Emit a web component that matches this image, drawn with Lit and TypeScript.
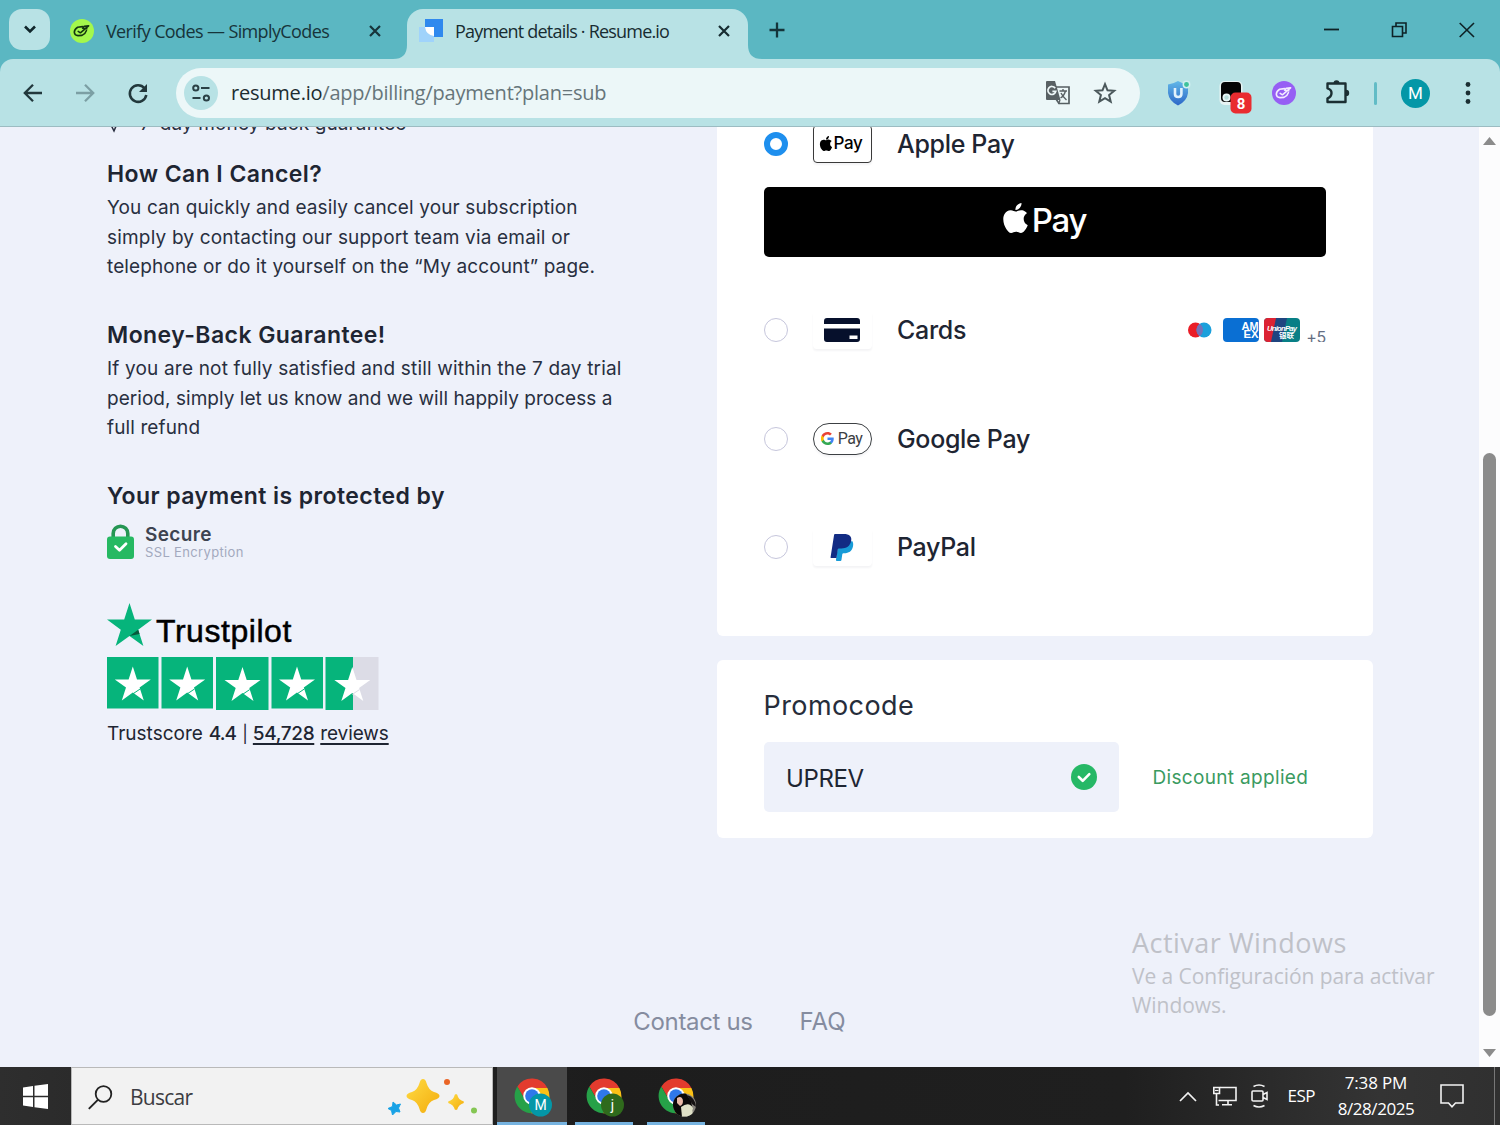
import { LitElement, html, css, svg } from "lit";
import { customElement } from "lit/decorators.js";

const APPLE =
  "M12.152 6.896c-.948 0-2.415-1.078-3.96-1.04-2.04.027-3.91 1.183-4.961 3.014-2.117 3.675-.546 9.103 1.519 12.09 1.013 1.454 2.208 3.09 3.792 3.039 1.52-.065 2.09-.987 3.935-.987 1.831 0 2.35.987 3.96.948 1.637-.026 2.676-1.48 3.676-2.948 1.156-1.688 1.636-3.325 1.662-3.415-.039-.013-3.182-1.221-3.22-4.857-.026-3.04 2.48-4.494 2.597-4.559-1.429-2.09-3.623-2.324-4.39-2.376-2-.156-3.675 1.09-4.61 1.09zM15.53 3.83c.843-1.012 1.4-2.427 1.245-3.83-1.207.052-2.662.805-3.532 1.818-.78.896-1.454 2.338-1.273 3.714 1.338.104 2.715-.688 3.559-1.701";

const STAR = "M0 -18 L4.2 -5 H18 L6.8 3 L11 16 L0 8 L-11 16 L-6.8 3 L-18 -5 H-4.2 Z";

const tagMark = (color: string) => svg`
  <g fill="none" stroke=${color} stroke-width="1.6" stroke-linecap="round" stroke-linejoin="round">
    <path d="M12.5 7.6L7.6 8.2Q4.4 10.2 4.3 13.2Q4.6 16.4 8 16.6L12 16.4Q15.6 14.6 16.4 11.6"/>
    <path d="M8.2 12.4L10.4 13.8L18.6 6.8L14.2 7.2L12.6 9.2L16.8 9.8"/>
  </g>`;

@customElement("browser-tabs")
class BrowserTabs extends LitElement {
  static styles = css`
    :host { display: flex; height: 59px; background: #5bb7c2; font-family: "Open Sans", sans-serif; font-size: 18px; color: #17343a; }
    svg { display: block; flex: none; }
    .search { width: 41px; height: 41px; margin: 9px 0 0 9px; border-radius: 13px; background: #b8e2e5; display: grid; place-items: center; box-sizing: border-box; }
    .tab { display: flex; align-items: center; height: 59px; box-sizing: border-box; padding-top: 2px; }
    .idle { width: 343px; padding-left: 20px; }
    .active { width: 341px; height: 50px; margin-top: 9px; padding: 0 0 7px 12px; background: #b8e2e5; border-radius: 16px 16px 0 0; color: #172c31; }
    .title { white-space: nowrap; line-height: 26px; flex: none; }
    .idle .title { width: 262px; margin-left: 12px; letter-spacing: -0.62px; }
    .active .title { width: 262px; margin-left: 12px; letter-spacing: -0.8px; }
    .icons { margin-left: 6px; margin-top: 21px; height: 18px; }
    .window { display: flex; gap: 52px; margin: 21px 25px 0 auto; }
    .flare { align-self: flex-end; }
  `;
  render() {
    return html`
      <div class="search"><svg width="14" height="9" viewBox="0 0 14 9"><path d="M2 1.5L7 6.5L12 1.5" fill="none" stroke="#10262b" stroke-width="2.6"/></svg></div>
      <div class="tab idle">
        <svg width="24" height="24" viewBox="0 0 24 24"><circle cx="12" cy="12" r="12" fill="#a4f84c"/>${tagMark("#14360f")}</svg>
        <span class="title">Verify Codes — SimplyCodes</span>
        <svg width="14" height="14" viewBox="0 0 14 14"><path d="M2 2L12 12M12 2L2 12" stroke="#17343a" stroke-width="2.2"/></svg>
      </div>
      <svg class="flare" width="14" height="14" viewBox="0 0 14 14"><path d="M14 0Q14 14 0 14H14Z" fill="#b8e2e5"/></svg>
      <div class="tab active">
        <svg width="24" height="24" viewBox="0 0 24 24">
          <path d="M6 0H24V18H6Z" fill="#2f89ee"/><path d="M0 8H15V23H0Z" fill="#a0d3fb"/><path d="M6 8H15V17Q7 16 6 8Z" fill="#fff"/>
        </svg>
        <span class="title">Payment details · Resume.io</span>
        <svg width="14" height="14" viewBox="0 0 14 14"><path d="M2 2L12 12M12 2L2 12" stroke="#172c31" stroke-width="2.2"/></svg>
      </div>
      <svg class="flare" width="14" height="14" viewBox="0 0 14 14"><path d="M0 0Q0 14 14 14H0Z" fill="#b8e2e5"/></svg>
      <svg class="icons" width="18" height="18" viewBox="0 0 18 18"><path d="M9 1.5V16.5M1.5 9H16.5" stroke="#14343a" stroke-width="2.3"/></svg>
      <div class="window">
        <svg width="16" height="18" viewBox="0 0 16 18"><path d="M1 8.500H16" stroke="#0e2226" stroke-width="1.800"/></svg>
        <svg width="16" height="18" viewBox="0 0 16 18"><path d="M1.500 5.500H11.500V15.500H1.500ZM5 5V2H15V12H12" fill="none" stroke="#0e2226" stroke-width="1.600"/></svg>
        <svg width="16" height="18" viewBox="0 0 16 18"><path d="M.7 2L15 16M15 2L.7 16" stroke="#0e2226" stroke-width="1.600"/></svg>
      </div>`;
  }
}

@customElement("browser-toolbar")
class BrowserToolbar extends LitElement {
  static styles = css`
    :host { display: block; height: 68px; background: #5bb7c2; font-family: "Open Sans", sans-serif; }
    svg { display: block; flex: none; overflow: visible; }
    .bar { display: flex; height: 68px; box-sizing: border-box; padding: 9px 20px 0 20px; background: #b8e2e5; border-radius: 13px 13px 0 0; border-bottom: 1.5px solid #9cbcc2; }
    .nav { display: flex; gap: 26px; width: 157px; height: 50px; align-items: center; }
    .omni { display: flex; align-items: center; width: 964px; height: 50px; margin-left: -1px; box-sizing: border-box; padding: 0 23px 0 8px; border-radius: 25px; background: #ecf7f8; }
    .site { width: 34px; height: 34px; border-radius: 50%; background: #b8e2e5; display: grid; place-items: center; }
    .url { flex: 1; margin-left: 13px; font-size: 20px; line-height: 28px; letter-spacing: -0.22px; color: #66757a; }
    .host { color: #1c2c30; }
    .omni .star { margin-left: 22px; }
    .ext { display: flex; align-items: center; height: 50px; flex: 1; }
    .shield { margin-left: 27px; }
    .mask { margin-left: 29px; }
    .simply { margin-left: 20px; }
    .puzzle { margin-left: 29px; }
    .rule { width: 3px; height: 23px; margin-left: 23px; background: #62bcc6; border-radius: 2px; }
    .avatar { width: 29px; height: 29px; margin-left: 24px; border-radius: 50%; background: #0497a7; color: #fff; text-align: center; font: 400 17px/29px Roboto, sans-serif; }
    .dots { margin-left: 35px; }
  `;
  render() {
    return html`<div class="bar">
      <div class="nav">
        <svg width="26" height="26" viewBox="0 0 26 26"><path d="M22 13H5.500M13 4.800L4.800 13L13 21.200" fill="none" stroke="#22383c" stroke-width="2.300"/></svg>
        <svg width="26" height="26" viewBox="0 0 26 26"><path d="M4 13H20.500M13 4.800L21.200 13L13 21.200" fill="none" stroke="#7c9fa4" stroke-width="2.300"/></svg>
        <svg width="26" height="26" viewBox="0 0 26 26"><path d="M20.500 8.200A8.300 8.300 0 1 0 22.300 15" fill="none" stroke="#22383c" stroke-width="2.500"/><path d="M23 4V12H15Z" fill="#22383c"/></svg>
      </div>
      <div class="omni">
        <div class="site"><svg width="20" height="18" viewBox="0 0 20 18"><g fill="none" stroke="#2a4045" stroke-width="2"><circle cx="4.800" cy="4" r="2.600"/><path d="M10 4H18.500M1.500 14H9.500"/><circle cx="15.400" cy="14" r="2.600"/></g></svg></div>
        <span class="url"><span class="host">resume.io</span>/app/billing/payment?plan=sub</span>
        <svg width="26" height="26" viewBox="0 0 26 26">
          <path d="M10 7H24V23.500H14L11 19" fill="none" stroke="#555f62" stroke-width="1.700"/>
          <path d="M2 1H10L15.500 20H2Q1 20 1 19V2Q1 1 2 1Z" fill="#596164"/>
          <path d="M10.200 8.200A4 4 0 1 0 10.800 11.400H7.400" fill="none" stroke="#eef7f8" stroke-width="1.700"/>
          <path d="M14.500 11H22M18 9V11M20.500 11Q19 16 15.500 18M16 13Q18 17 21.500 20M15 20L13.500 24" fill="none" stroke="#596164" stroke-width="1.400"/>
        </svg>
        <svg class="star" width="24" height="24" viewBox="0 0 24 24"><path d="M12 3.200L14.500 9.300L21.200 9.800L16.100 14.100L17.700 20.600L12 17.100L6.300 20.600L7.900 14.100L2.800 9.800L9.500 9.300Z" fill="none" stroke="#4b585b" stroke-width="2"/></svg>
      </div>
      <div class="ext">
        <svg class="shield" width="24" height="26" viewBox="0 0 24 26">
          <defs><linearGradient id="sh" x1="0" y1="0" x2="0" y2="1"><stop offset="0" stop-color="#62b8e8"/><stop offset="1" stop-color="#2c67c8"/></linearGradient></defs>
          <path d="M11 1Q16 4 21 4.500V13Q20 21 11 25.500Q2 21 1 13V4.500Q6 4 11 1Z" fill="url(#sh)"/>
          <path d="M8 8V14Q8 17 11.200 17Q14.400 17 14.400 14V8" fill="none" stroke="#e2f2fc" stroke-width="2.600"/>
          <circle cx="19.500" cy="4.500" r="3.200" fill="#3ec29b" stroke="#d2eff0" stroke-width="1.500"/>
        </svg>
        <svg class="mask" width="32" height="32" viewBox="0 0 32 32">
          <rect x="-.5" y="4" width="23" height="24" rx="5" fill="#e6f3f3"/><rect x="1" y="5" width="20" height="20" rx="4" fill="#050505"/>
          <circle cx="6.500" cy="20.500" r="4" fill="#e9f7f7"/><circle cx="6.500" cy="20.500" r="2.200" fill="#b8dedb"/>
          <rect x="10.500" y="15.500" width="21" height="21" rx="5" fill="#e92c30"/>
          <text x="21" y="31.500" text-anchor="middle" font-family="Roboto, sans-serif" font-weight="700" font-size="15" fill="#fff">8</text>
        </svg>
        <svg class="simply" width="24" height="24" viewBox="0 0 24 24"><circle cx="12" cy="12" r="12" fill="#965ff4"/>${tagMark("#f3ecff")}</svg>
        <svg class="puzzle" width="26" height="26" viewBox="0 0 26 26">
          <path d="M2.500 3.500H20.500V22H2.500V18.300Q6.500 17 6.500 13Q6.500 9.500 2.500 8.300Z" fill="none" stroke="#1b2f33" stroke-width="2.400" stroke-linejoin="round"/>
          <path d="M8.500 3.300A3 3 0 0 1 14.500 3.300ZM21 9.700A3.200 3.200 0 0 1 21 16.100Z" fill="#1b2f33"/>
        </svg>
        <div class="rule"></div>
        <div class="avatar">M</div>
        <svg class="dots" width="6" height="24" viewBox="0 0 6 24"><g fill="#1b2f33"><circle cx="3" cy="3.500" r="2.400"/><circle cx="3" cy="12" r="2.400"/><circle cx="3" cy="20.500" r="2.400"/></g></svg>
      </div>
    </div>`;
  }
}

@customElement("trust-info")
class TrustInfo extends LitElement {
  static styles = css`
    :host { display: flex; flex-direction: column; width: 717px; flex: none; box-sizing: border-box; padding-left: 107px; font-family: Inter, sans-serif; color: #1e2532; }
    svg { display: block; flex: none; }
    p { margin: 0; font-size: 19px; line-height: 29.33px; letter-spacing: 0.12px; color: #282f40; white-space: nowrap; }
    p span { display: block; }
    .w1 { letter-spacing: 0.18px; }
    .w2 { letter-spacing: 0.04px; }
    .clip { display: flex; align-items: center; gap: 21px; margin-top: -18px; padding-left: 4px; }
    h3 { margin: 39px 0 4px; font-size: 23px; line-height: 30px; font-weight: 600; letter-spacing: 0.43px; white-space: nowrap; }
    .clip + h3 { margin-top: 21px; }
    .ssl { display: flex; gap: 11px; height: 36px; margin-top: 9px; }
    .ssl b { display: block; font-size: 19px; line-height: 21px; font-weight: 600; letter-spacing: 0.35px; color: #3d4351; }
    .ssl small { display: block; font-size: 13px; line-height: 15px; letter-spacing: 0.35px; color: #a3a9be; }
    .tp { display: flex; gap: 4px; height: 44px; margin-top: 43px; }
    .tp span { font: 32px/56px "Liberation Sans", sans-serif; letter-spacing: 0.55px; color: #000; -webkit-text-stroke: 0.5px #000; }
    .rating { margin-top: 10px; }
    .score { display: flex; margin-top: 8px; font-size: 19px; line-height: 32px; }
    .num { font-weight: 500; letter-spacing: -0.9px; margin-left: 6px; }
    .bar { margin: 0 5px 0 6px; font-size: 17px; }
    .link { text-decoration: underline; text-underline-offset: 3px; text-decoration-thickness: 1.5px; letter-spacing: -0.1px; }
    .score .count { font-weight: 500; letter-spacing: -0.35px; margin-right: 6px; }
  `;
  render() {
    return html`
      <p class="clip"><svg width="8" height="18" viewBox="0 0 8 18"><path d="M0 10L3 16L8 4" fill="none" stroke="#282f40" stroke-width="1.500"/></svg>7-day money back guarantee</p>
      <h3>How Can I Cancel?</h3>
      <p><span>You can quickly and easily cancel your subscription</span><span class="w1">simply by contacting our support team via email or</span><span>telephone or do it yourself on the “My account” page.</span></p>
      <h3>Money-Back Guarantee!</h3>
      <p><span class="w1">If you are not fully satisfied and still within the 7 day trial</span><span class="w2">period, simply let us know and we will happily process a</span><span>full refund</span></p>
      <h3>Your payment is protected by</h3>
      <div class="ssl">
        <svg width="27" height="36" viewBox="0 0 27 36"><path d="M6.200 14V9.500A7.300 7.300 0 0 1 20.800 9.500V14" fill="none" stroke="#259653" stroke-width="3.600"/><rect x="0" y="12.500" width="27" height="22.500" rx="3" fill="#26b962"/><path d="M8.500 22.500L12.500 26.200L19 19.700" fill="none" stroke="#fff" stroke-width="2.800" stroke-linecap="round" stroke-linejoin="round"/></svg>
        <div><b>Secure</b><small>SSL Encryption</small></div>
      </div>
      <div class="tp">
        <svg width="45" height="44" viewBox="0 0 45 44"><path d="M22.500 0L27.800 16.500H45L31.200 26.700L36.400 43L22.500 32.900L8.600 43L13.800 26.700L0 16.500H17.200Z" fill="#06b47b"/><path d="M31.200 26.700L22.500 32.900L32.600 30.900Z" fill="#065a3c"/></svg>
        <span>Trustpilot</span>
      </div>
      <svg class="rating" width="272" height="53" viewBox="0 0 272 53">
        <g fill="#06b47b"><path d="M0 0H51.500V51.500H0ZM54.500 0H106V51.500H54.500ZM109 0H161.500V53H109ZM164.500 0H216V51.500H164.500ZM218.500 0H246V53H218.500Z"/></g>
        <path d="M246 0H271.500V53H246Z" fill="#dcdce6"/>
        ${[25.8, 80.2, 135.5, 190, 245.3].map(
          (x, i) => svg`<g transform="translate(${x} ${i % 2 || i === 0 ? 27.500 : 28})"><path d=${STAR} fill="#fff"/><path d="M7.200 4.600L0 9.400" stroke=${i === 4 ? "#dcdce6" : "#06b47b"} stroke-width="1"/></g>`
        )}
      </svg>
      <div class="score"><span>Trustscore</span><span class="num">4.4</span><span class="bar">|</span><span class="link count">54,728</span><span class="link">reviews</span></div>`;
  }
}

@customElement("payment-panel")
class PaymentPanel extends LitElement {
  static styles = css`
    :host { display: block; width: 656px; font-family: Inter, sans-serif; color: #1e2532; }
    svg { display: block; flex: none; }
    .card { background: #fff; border-radius: 6px; box-sizing: border-box; padding: 0 47px 0 46.5px; }
    .methods { height: 509px; border-radius: 0 0 6px 6px; overflow: hidden; }
    .row { display: flex; align-items: center; height: 34px; }
    .cards { margin-top: 56px; }
    .wide { margin-top: 74.5px; }
    .radio { width: 24px; height: 24px; box-sizing: border-box; border: 1.5px solid #c6c6dc; border-radius: 50%; }
    .on { border: 6px solid #1e8fee; }
    .logo { display: flex; align-items: center; justify-content: center; width: 59px; height: 38px; margin-left: 25.5px; box-sizing: border-box; border-radius: 4px; box-shadow: 0 2px 2px rgba(30, 40, 80, 0.05); }
    .apple { border: 1.5px solid #3a3a3a; color: #000; font-size: 17px; line-height: 20px; letter-spacing: -0.3px; font-weight: 500; gap: 0; padding: 0 3px 2px 0; }
    .google { height: 32px; border: 1.5px solid #3c4043; border-radius: 16px; color: #3c4043; font-family: Roboto, sans-serif; font-size: 16px; letter-spacing: -0.6px; gap: 4px; padding-right: 2px; }
    .plain { padding-right: 2px; }
    .name { margin-left: 25px; flex: 1; font-size: 25px; font-weight: 500; line-height: 32px; letter-spacing: -0.32px; white-space: nowrap; }
    .pay { display: flex; align-items: flex-start; justify-content: center; gap: 4px; width: 562px; height: 70px; margin-top: 26px; box-sizing: border-box; padding-top: 16px; background: #000; border-radius: 5px; color: #fff; }
    .pay span { font-size: 33px; font-weight: 500; line-height: 34px; letter-spacing: -1.2px; }
    .brands { display: flex; align-items: center; gap: 5px; }
    .more { height: 12px; margin-top: 12px; margin-left: 1px; overflow: hidden; font-size: 16px; line-height: 14px; letter-spacing: -0.3px; color: #656e83; }
    .promo { height: 178px; margin-top: 24px; padding-top: 28px; }
    h2 { margin: 0; font-size: 27px; font-weight: 400; line-height: 36px; letter-spacing: 0.42px; color: #262d3b; }
    .line { display: flex; align-items: center; margin-top: 18px; }
    .field { display: flex; align-items: center; justify-content: space-between; width: 355px; height: 70px; box-sizing: border-box; padding: 0 22px 0 22.5px; border-radius: 5px; background: #eef1fa; font-size: 24px; letter-spacing: -0.4px; }
    .field span { padding-top: 3px; }
    .ok { margin-left: 34px; font-size: 19px; letter-spacing: 0.33px; color: #3a9b5f; }
  `;
  render() {
    return html`
      <div class="card methods">
        <div class="row"><div class="radio on"></div>
          <div class="logo apple"><svg width="14" height="15" viewBox="2 0 20 24"><path d=${APPLE}/></svg>Pay</div>
          <span class="name">Apple Pay</span></div>
        <div class="pay"><svg width="25" height="30" viewBox="2 0 20 24"><path d=${APPLE} fill="#fff"/></svg><span>Pay</span></div>
        <div class="row cards"><div class="radio"></div>
          <div class="logo plain"><svg width="36" height="24" viewBox="0 0 36 24"><path d="M3 0H33Q36 0 36 3V6H0V3Q0 0 3 0ZM0 10.500H36V21Q36 24 33 24H3Q0 24 0 21Z" fill="#06102c"/><path d="M25.500 17.500H33.500V21H25.500Z" fill="#fff"/></svg></div>
          <span class="name">Cards</span>
          <div class="brands">
            <svg width="36" height="24" viewBox="0 0 36 24"><circle cx="13.500" cy="12" r="7.500" fill="#ea1d27"/><circle cx="22" cy="12" r="7.500" fill="#1ba0dc"/><path d="M17.750 5.800A7.500 7.500 0 0 1 17.750 18.200A7.500 7.500 0 0 1 17.750 5.800Z" fill="#7572b8"/></svg>
            <svg width="36" height="24" viewBox="0 0 36 24"><rect width="36" height="24" rx="4" fill="#0a6fd3"/><g font-family="Liberation Sans, sans-serif" font-weight="700" font-size="10" fill="#fff"><text x="18.500" y="11.500" textLength="17" lengthAdjust="spacingAndGlyphs">AM</text><text x="20.500" y="20" textLength="15" lengthAdjust="spacingAndGlyphs">EX</text></g></svg>
            <svg width="36" height="24" viewBox="0 0 36 24"><rect width="36" height="24" rx="4" fill="#087f86"/><path d="M4 0H13L8 24H4Q0 24 0 20V4Q0 0 4 0Z" fill="#dc2233"/><path d="M12 0H23L18 24H7Z" fill="#1f4580"/><text x="3" y="12.500" font-family="Liberation Sans, sans-serif" font-style="italic" font-weight="700" font-size="7.600" textLength="30" fill="#fff">UnionPay</text><text x="15" y="19.500" font-family="Noto Sans CJK SC, sans-serif" font-weight="700" font-size="6.500" textLength="15" lengthAdjust="spacingAndGlyphs" fill="#fff">银联</text></svg>
            <span class="more">+5</span>
          </div></div>
        <div class="row wide"><div class="radio"></div>
          <div class="logo google"><svg width="13" height="13" viewBox="0 0 24 24"><path d="M23.500 12.300c0-.9-.1-1.500-.2-2.200H12v4.500h6.500c-.3 1.500-1.100 2.800-2.400 3.600v3h3.900c2.200-2.100 3.500-5.200 3.500-8.900z" fill="#4285f4"/><path d="M12 24c3.200 0 6-1.100 8-2.900l-3.900-3c-1.100.7-2.400 1.200-4.100 1.200-3.100 0-5.800-2.100-6.700-5H1.200v3.100C3.200 21.300 7.300 24 12 24z" fill="#34a853"/><path d="M5.300 14.300a7.200 7.200 0 0 1 0-4.600V6.600H1.200a12 12 0 0 0 0 10.800z" fill="#fbbc04"/><path d="M12 4.800c1.800 0 3.300.6 4.600 1.800L20 3.200C18 1.200 15.200 0 12 0 7.300 0 3.200 2.700 1.200 6.600l4.100 3.100c.9-2.800 3.600-4.900 6.700-4.900z" fill="#ea4335"/></svg>Pay</div>
          <span class="name">Google Pay</span></div>
        <div class="row wide"><div class="radio"></div>
          <div class="logo plain"><svg width="24" height="27" viewBox="1.500 0 21 24"><path d="M21 6.300c.9 1.100 1.200 2.500.8 4.500-.9 4.500-3.900 6.200-7.800 6.200h-.7c-.5 0-.9.3-1 .8l-.8 5.300c-.1.500-.4.800-.9.800H7.200c-.4 0-.6-.3-.6-.7L8.300 12z" fill="#179bd7"/><path d="M7.076 21.337H2.470a.641.641 0 0 1-.633-.74L4.944.901C5.026.382 5.474 0 5.998 0h7.460c2.570 0 4.578.543 5.690 1.810 1.010 1.150 1.304 2.420 1.012 4.287-.983 5.050-4.349 6.797-8.647 6.797h-2.190c-.524 0-.968.382-1.050.9l-1.120 7.106z" fill="#122c84"/></svg></div>
          <span class="name">PayPal</span></div>
      </div>
      <div class="card promo">
        <h2>Promocode</h2>
        <div class="line">
          <div class="field"><span>UPREV</span><svg width="26" height="26" viewBox="0 0 26 26"><circle cx="13" cy="13" r="13" fill="#26b866"/><path d="M7.800 13L11.700 16.800L18.300 10.200" fill="none" stroke="#fff" stroke-width="2.600" stroke-linecap="round" stroke-linejoin="round"/></svg></div>
          <span class="ok">Discount applied</span>
        </div>
      </div>`;
  }
}

@customElement("task-bar")
class TaskBar extends LitElement {
  static styles = css`
    :host { display: flex; height: 58px; background: linear-gradient(90deg, #2e2e2e 0, #2b2b2b 5%, #1d1d1d 40%, #1f1f1f 75%, #343434 92%, #303030 100%); font-family: "Open Sans", sans-serif; color: #fff; }
    svg { display: block; flex: none; overflow: visible; }
    .start { width: 71px; display: grid; place-items: center; }
    .search { display: flex; align-items: center; width: 422px; box-sizing: border-box; padding: 2px 16px 0 16px; background: #f2f2f2; border: 1px solid #b9b9b9; color: #3c3c42; font-size: 21px; letter-spacing: -0.75px; }
    .search span { flex: 1; margin-left: 17px; }
    .app { width: 58px; box-sizing: border-box; border-bottom: 3px solid #76b3e0; display: grid; place-items: center; padding-top: 3px; margin-left: 8px; }
    .now { width: 70px; margin-left: 4px; background: #4a4a4a; }
    .app + .app + .app { margin-left: 14px; }
    .tray { display: flex; align-items: center; margin-left: auto; font-size: 17px; }
    .net { margin-left: 16px; }
    .cam { margin-left: 14px; }
    .lang { margin-left: 20px; margin-top: -2px; letter-spacing: -0.5px; }
    .clock { width: 90px; margin-left: 16px; text-align: center; line-height: 26px; padding-bottom: 1px; }
    .time { letter-spacing: -0.15px; }
    .date { letter-spacing: -0.45px; }
    .note { margin-left: 19px; }
    .edge { align-self: stretch; width: 1px; margin: 0 5px 0 30px; background: #777; }
  `;
  chrome(badge: unknown) {
    return html`<svg width="38" height="38" viewBox="0 0 38 38">
      <g transform="scale(.79)">
        <path d="M5.540 12.030A22 22 0 0 1 43.600 14H24A10 10 0 0 0 15.340 29Z" fill="#e33b2e"/>
        <path d="M43.600 14A22 22 0 0 1 22.860 45.970L32.660 29A10 10 0 0 0 24 14Z" fill="#fbc116"/>
        <path d="M22.860 45.970A22 22 0 0 1 5.540 12.030L15.340 29A10 10 0 0 0 32.660 29Z" fill="#26a148"/>
        <circle cx="24" cy="24" r="11" fill="#fff"/><circle cx="24" cy="24" r="8.600" fill="#2f78ea"/>
      </g>${badge}</svg>`;
  }
  render() {
    const letter = (t: string, c: string) => svg`<circle cx="27.500" cy="28" r="11.500" fill=${c}/><text x="27.500" y="33" text-anchor="middle" font-family="Roboto, sans-serif" font-size="14" fill="#fff">${t}</text>`;
    const photo = svg`<defs><clipPath id="face"><circle cx="27.500" cy="28" r="11.500"/></clipPath></defs><g clip-path="url(#face)"><path d="M15 15H40V40H15Z" fill="#8b8780"/><path d="M15 15H28L34 24L36 34L24 40H15Z" fill="#0b0909"/><path d="M20 21Q25 18 26 24Q26 28 23 29L20 26Z" fill="#e8b8a6"/><path d="M24 30Q32 24 36 31L35 40H25Z" fill="#dfe0c6"/><path d="M30 18Q38 20 39 30L35 27Z" fill="#151212"/></g>`;
    return html`
      <div class="start"><svg width="25" height="25" viewBox="0 0 25 25"><path d="M0 3.500L10 2V11.800H0ZM11.500 1.800L25 0V11.800H11.500ZM0 13.200H10V23L0 21.500ZM11.500 13.200H25V25L11.500 23.200Z" fill="#fff"/></svg></div>
      <div class="search">
        <svg width="25" height="25" viewBox="0 0 25 25"><circle cx="15.500" cy="9" r="7.800" fill="none" stroke="#222" stroke-width="1.800"/><path d="M9.800 14.800L.8 23.800" stroke="#222" stroke-width="1.900"/></svg>
        <span>Buscar</span>
        <svg width="88" height="38" viewBox="0 0 88 38">
          <defs><linearGradient id="gold" x1="0" y1="0" x2="1" y2="1"><stop offset="0" stop-color="#ffdc44"/><stop offset="1" stop-color="#f3ab0c"/></linearGradient></defs>
          <path d="M35 1Q37.500 1 38.500 5Q40.500 12 46 14Q51.500 15.500 51.500 18Q51.500 20.500 46 22Q40.500 24 38.500 31Q37.500 35 35 35Q32.500 35 31.500 31Q29.500 24 24 22Q18.500 20.500 18.500 18Q18.500 15.500 24 14Q29.500 12 31.500 5Q32.500 1 35 1Z" fill="url(#gold)"/>
          <path d="M68 16Q69.500 16 70 19Q71 21.500 73.500 22.500Q76 23 76 24Q76 25.500 73.500 26Q71 27 70 29.500Q69.500 32 68 32Q66.500 32 66 29.500Q65 27 62.500 26Q60 25.500 60 24Q60 23 62.500 22.500Q65 21.500 66 19Q66.500 16 68 16Z" fill="url(#gold)"/>
          <path d="M5 24L8.500 27L12.500 26L10.500 30L12 34L8 33.500L4.500 37L3.500 32.500L0 30.500L4.500 28.500Z" fill="#18a2e6" stroke="#18a2e6" stroke-linejoin="round"/>
          <circle cx="59" cy="4" r="3" fill="#ea6526"/><circle cx="86" cy="32.500" r="3" fill="#85c653"/>
        </svg>
      </div>
      <div class="app now">${this.chrome(letter("M", "#0497a7"))}</div>
      <div class="app">${this.chrome(letter("j", "#2f6a1c"))}</div>
      <div class="app">${this.chrome(photo)}</div>
      <div class="tray">
        <svg width="18" height="11" viewBox="0 0 18 11"><path d="M1 10L9 2L17 10" fill="none" stroke="#f2f2f2" stroke-width="1.700"/></svg>
        <svg class="net" width="24" height="20" viewBox="0 0 24 20"><path d="M7 1.500H23V14.500H5.500M15 14.500V18.500M9 18.800H19M3.500 8V19H6" fill="none" stroke="#f2f2f2" stroke-width="1.600"/><path d="M.8 1.500H6.500V7.500H.8Z" fill="#292929" stroke="#f2f2f2" stroke-width="1.600"/><path d="M2 4.500H5.500" stroke="#f2f2f2" stroke-width="1.200"/></svg>
        <svg class="cam" width="17" height="24" viewBox="0 0 17 24"><path d="M1.500 7H11Q12 7 12 8V16Q12 17 11 17H2.500Q1 17 1 16V8Q1 7 2 7ZM12 10.500L16 8.500V15.500L12 13.500M2.500 2.500Q8 -.5 13.500 2.500M2.500 21.500Q8 24.500 13.500 21.500" fill="none" stroke="#f2f2f2" stroke-width="1.600"/></svg>
        <span class="lang">ESP</span>
        <div class="clock"><div class="time">7:38 PM</div><div class="date">8/28/2025</div></div>
        <svg class="note" width="24" height="24" viewBox="0 0 24 24"><path d="M1 1H23V19H15.500L12 22.800L8.500 19H1Z" fill="none" stroke="#f2f2f2" stroke-width="1.600"/></svg>
        <div class="edge"></div>
      </div>`;
  }
}

@customElement("app-root")
class AppRoot extends LitElement {
  static styles = css`
    :host { display: flex; flex-direction: column; width: 1500px; height: 1125px; overflow: hidden; position: relative; background: #eef1fa; }
    .page { display: flex; flex: 1; min-height: 0; }
    .view { width: 1479px; overflow: hidden; display: flex; flex-direction: column; }
    .cols { display: flex; flex: 1; }
    .foot { display: flex; gap: 47px; justify-content: center; height: 60px; font: 24px/30px Inter, sans-serif; color: #858c9f; }
    .foot span:first-child { letter-spacing: -0.35px; }
    .scroll { width: 21px; box-sizing: border-box; padding: 10px 4px 10px 4px; display: flex; flex-direction: column; justify-content: space-between; background: #fcfcfd; }
    .thumb { height: 563px; width: 13px; margin-top: 274px; border-radius: 7px; background: #8b8b8b; }
    .scroll svg { display: block; }
    .mark { position: absolute; left: 1132px; top: 926px; font-family: "Open Sans", sans-serif; color: #bfc1c8; white-space: nowrap; }
    .mark div { font-size: 21px; line-height: 29.5px; letter-spacing: -0.06px; }
    .mark .big { font-size: 27px; line-height: 34px; letter-spacing: 0.46px; margin-bottom: 1.5px; }
  `;
  render() {
    return html`
      <browser-tabs></browser-tabs>
      <browser-toolbar></browser-toolbar>
      <div class="page">
        <div class="view">
          <div class="cols"><trust-info></trust-info><payment-panel></payment-panel></div>
          <div class="foot"><span>Contact us</span><span>FAQ</span></div>
        </div>
        <div class="scroll">
          <svg width="13" height="8" viewBox="0 0 13 8"><path d="M6.500 0L13 8H0Z" fill="#8b8b8b"/></svg>
          <div class="thumb"></div>
          <svg width="13" height="8" viewBox="0 0 13 8"><path d="M0 0H13L6.500 8Z" fill="#8b8b8b"/></svg>
        </div>
      </div>
      <task-bar></task-bar>
      <div class="mark"><div class="big">Activar Windows</div><div>Ve a Configuración para activar</div><div>Windows.</div></div>`;
  }
}
